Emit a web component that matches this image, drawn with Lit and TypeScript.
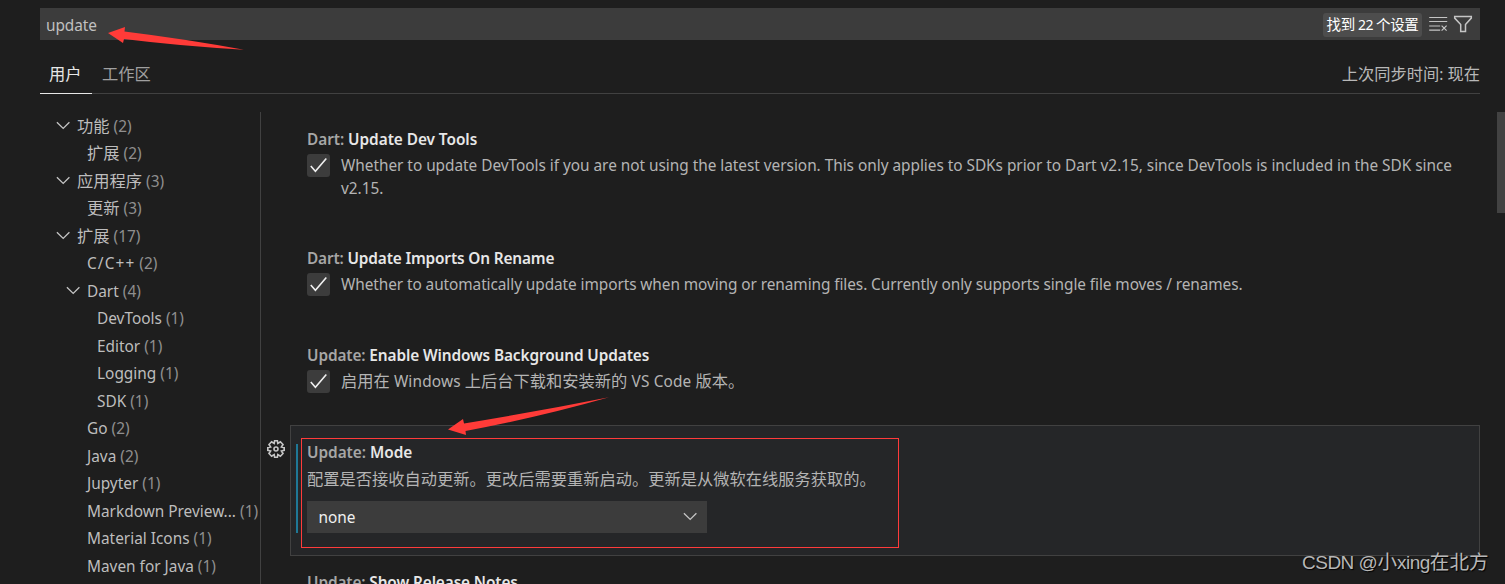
import { LitElement, html, css, svg, nothing, TemplateResult } from "lit";
import { customElement, property } from "lit/decorators.js";
import { classMap } from "lit/directives/class-map.js";

const CJK = /([\u3000-\u303f\u4e00-\u9fff]+)/;

/** Wraps runs of Chinese text so that they get their own size and tracking. */
const mixed = (text: string) =>
  text.split(CJK).map((part, i) => (i % 2 ? html`<span class="han">${part}</span>` : part));

const hanStyle = css`
  .han {
    font-family: "Noto Sans CJK SC", sans-serif;
    font-size: 16.25px;
    letter-spacing: 0;
    line-height: 1;
  }
`;

const chevron = html`<svg width="20" height="20" viewBox="0 0 20 20" fill="none" stroke="currentColor" stroke-width="1.3">${svg`<path d="M3.9 6.3 10.200 12.400l6.200-6.100" />`}</svg>`;

interface TreeRow {
  label: string;
  count: number;
  level: number;
  open?: boolean;
  wide?: boolean;
}

const ROWS: TreeRow[] = [
  { label: "功能", count: 2, level: 0, open: true },
  { label: "扩展", count: 2, level: 1 },
  { label: "应用程序", count: 3, level: 0, open: true },
  { label: "更新", count: 3, level: 1 },
  { label: "扩展", count: 17, level: 0, open: true },
  { label: "C/C++", count: 2, level: 1, wide: true },
  { label: "Dart", count: 4, level: 1, open: true },
  { label: "DevTools", count: 1, level: 2 },
  { label: "Editor", count: 1, level: 2 },
  { label: "Logging", count: 1, level: 2 },
  { label: "SDK", count: 1, level: 2 },
  { label: "Go", count: 2, level: 1 },
  { label: "Java", count: 2, level: 1 },
  { label: "Jupyter", count: 1, level: 1 },
  { label: "Markdown Preview...", count: 1, level: 1 },
  { label: "Material Icons", count: 1, level: 1 },
  { label: "Maven for Java", count: 1, level: 1 },
];

@customElement("settings-toc")
export class SettingsToc extends LitElement {
  static styles = [
    hanStyle,
    css`
      :host { display: block; }
      .row { display: flex; align-items: center; height: 27.5px; line-height: 27.5px; white-space: pre; padding-left: 37px; }
      .level-1 { padding-left: 47px; }
      .level-2 { padding-left: 57px; }
      .open { padding-left: 13px; }
      .open.level-1 { padding-left: 23px; }
      .twist { display: flex; width: 24px; color: #c5c5c5; }
      .label { color: #bdbdbd; }
      .wide { letter-spacing: 1.1px; }
      .count { color: #8f8f8f; margin-left: 4px; }
    `,
  ];

  render() {
    return ROWS.map(
      (r) => html`<div class=${classMap({ row: true, open: !!r.open, [`level-${r.level}`]: true })}>
        ${r.open ? html`<span class="twist">${chevron}</span>` : nothing}<span class=${classMap({ label: true, wide: !!r.wide })}>${mixed(r.label)}</span><span class="count">(${r.count})</span>
      </div>`
    );
  }
}

@customElement("setting-item")
export class SettingItem extends LitElement {
  @property() category = "";
  @property() name = "";
  @property() description = "";
  @property() kind = "check";
  @property() value = "";

  static styles = [
    hanStyle,
    css`
      :host { display: block; box-sizing: border-box; padding: 16px 16px 0 17px; }
      .title { line-height: 23px; font-weight: 600; white-space: pre; letter-spacing: var(--title-track, 0); }
      .category { color: #a6a6a6; }
      .name { color: #e7e7e7; }
      .line { display: flex; margin-top: 3px; }
      .box { display: flex; flex: none; width: 23px; height: 23px; border-radius: 3px; background: #3c3c3c; color: #f0f0f0; margin-right: 11px; }
      .desc { color: #b4b4b4; line-height: 23px; letter-spacing: var(--desc-track, 0); }
      .text { color: #b4b4b4; line-height: 23px; margin-top: 4px; }
      .select { display: flex; align-items: center; justify-content: space-between; box-sizing: border-box; width: 400px; height: 32px; margin-top: 10px; padding: 1px 7px 0 11.5px; background: #3c3c3c; color: #f0f0f0; }
      .select svg { color: #c5c5c5; }
    `,
  ];

  private body(): TemplateResult | typeof nothing {
    if (this.kind === "check") {
      return html`<div class="line">
        <span class="box"><svg width="23" height="23" viewBox="0 0 23 23" fill="none" stroke="currentColor" stroke-width="1.6">${svg`<path d="M3.8 12 8.400 17.200 19.300 4.400" />`}</svg></span>
        <span class="desc">${mixed(this.description)}</span>
      </div>`;
    }
    if (this.kind === "select") {
      return html`<div class="text">${mixed(this.description)}</div>
        <div class="select"><span>${this.value}</span>${chevron}</div>`;
    }
    return nothing;
  }

  render() {
    return html`<div class="title"><span class="category">${this.category}: </span><span class="name">${this.name}</span></div>
      ${this.body()}`;
  }
}

@customElement("app-root")
export class AppRoot extends LitElement {
  static styles = [
    hanStyle,
    css`
      :host {
        display: block;
        position: relative;
        box-sizing: border-box;
        width: 1505px;
        height: 584px;
        padding: 8px 25px 0 40px;
        overflow: hidden;
        background: #1e1e1e;
        color: #b8b8b8;
        font: 15.4px "Noto Sans", "Noto Sans CJK SC", sans-serif;
      }
      .search { display: flex; align-items: center; box-sizing: border-box; height: 32px; padding: 0 7px 0 6px; background: #3c3c3c; }
      .query { flex: 1; line-height: 30px; padding-top: 4px; color: #c0c0c0; letter-spacing: -0.1px; }
      .found { box-sizing: border-box; width: 99px; height: 24px; line-height: 24px; border-radius: 3px; background: #4d4d4d; color: #fff; text-align: center; white-space: nowrap; font-size: 14px; margin: 1px 6px 0 0; letter-spacing: -0.5px; }
      .found .han { font-size: 14.5px; letter-spacing: -0.4px; }
      .icon { display: block; color: #c5c5c5; }
      .icon + .icon { margin-left: 5px; }
      .tabs { display: flex; box-sizing: border-box; height: 54px; border-bottom: 1px solid #414141; line-height: 36px; padding-top: 17px; }
      .tab { box-sizing: border-box; height: 37px; padding: 0 10px 0 9px; width: 52px; color: #a0a0a0; white-space: nowrap; }
      .tab.active { color: #e7e7e7; border-bottom: 1px solid #e7e7e7; }
      .tab + .tab { padding-left: 10px; }
      .sync { margin-left: auto; white-space: pre; }
      .body { display: flex; margin-top: 18px; height: 472px; }
      .toc { box-sizing: border-box; width: 221px; height: 472px; border-right: 1px solid #414141; padding-top: 0.6px; flex: none; }
      .gutter { flex: none; width: 29px; padding: 327px 0 0 5px; box-sizing: border-box; color: #c5c5c5; }
      .list { flex: none; width: 1190px; }
      .one { height: 118.6px; --desc-track: -0.032px; --title-track: -0.06px; }
      .two { height: 97.4px; --desc-track: -0.081px; --title-track: -0.16px; }
      .three { height: 97px; --desc-track: 0.15px; --title-track: -0.12px; }
      .four { height: 131px; border: 1px solid #414141; background: #252628; padding: 15px 16px 0; --title-track: -0.04px; }
      .five { height: 60px; padding-top: 15px; --title-track: -0.12px; }
      .modified { position: absolute; left: 296px; top: 444px; width: 2px; height: 89px; background: #1f7896; }
      .scroll { position: absolute; left: 1497px; top: 112px; width: 8px; height: 101px; background: #424242; }
      .marks { position: absolute; inset: 0; }
      .watermark { position: absolute; left: 1302px; top: 548px; line-height: 29px; white-space: pre; color: #b7b7b7; font-family: "Liberation Sans", sans-serif; font-size: 19px; text-shadow: 1px 1px 1px #000; letter-spacing: -0.5px; }
      .watermark .han { font-size: 19.6px; }
    `,
  ];

  render() {
    return html`
      <div class="search">
        <span class="query">update</span>
        <span class="found">${mixed("找到 22 个设置")}</span>
        <svg class="icon" width="20" height="20" viewBox="0 0 20 20" fill="none" stroke="currentColor" stroke-width="1.2">
          <path d="M1.200 3.500h18M1.200 7.500h18M1.200 12h11M1.200 16.200h11M13.600 11.600l5 5M18.600 11.600l-5 5" />
        </svg>
        <svg class="icon" width="20" height="20" viewBox="0 0 20 20" fill="none" stroke="currentColor" stroke-width="1.5">
          <path d="M1.700 2.500h16.600v1.600l-5.800 6.500v7H7.700v-7L1.700 4.100z" />
        </svg>
      </div>
      <div class="tabs">
        <span class="tab active">${mixed("用户")}</span>
        <span class="tab">${mixed("工作区")}</span>
        <span class="sync">${mixed("上次同步时间: 现在")}</span>
      </div>
      <div class="body">
        <settings-toc class="toc"></settings-toc>
        <div class="gutter">
          <svg class="icon" width="20" height="20" viewBox="-10 -10 20 20" fill="none" stroke="currentColor" stroke-width="1.6">
            <path d="M-1.400-8.200H1.400L1.800-5.500 4.400-7.200 7-4.500 5.400-2 8.200-1.400V1.400L5.400 2 7 4.500 4.400 7.200 1.800 5.500 1.400 8.200H-1.400L-1.800 5.500-4.400 7.200-7 4.500-5.400 2-8.200 1.400V-1.400L-5.400-2-7-4.500-4.400-7.200-1.800-5.500Z" />
            <circle r="2" />
          </svg>
        </div>
        <div class="list">
          <setting-item class="one" category="Dart" name="Update Dev Tools" description="Whether to update DevTools if you are not using the latest version. This only applies to SDKs prior to Dart v2.15, since DevTools is included in the SDK since v2.15."></setting-item>
          <setting-item class="two" category="Dart" name="Update Imports On Rename" description="Whether to automatically update imports when moving or renaming files. Currently only supports single file moves / renames."></setting-item>
          <setting-item class="three" category="Update" name="Enable Windows Background Updates" description="启用在 Windows 上后台下载和安装新的 VS Code 版本。"></setting-item>
          <setting-item class="four" kind="select" category="Update" name="Mode" value="none" description="配置是否接收自动更新。更改后需要重新启动。更新是从微软在线服务获取的。"></setting-item>
          <setting-item class="five" kind="title" category="Update" name="Show Release Notes"></setting-item>
        </div>
      </div>
      <div class="modified"></div>
      <div class="scroll"></div>
      <svg class="marks" width="1505" height="584" viewBox="0 0 1505 584">
        <rect x="301.5" y="438.5" width="597" height="109" fill="none" stroke="#ff3b3b" />
        <path fill="#ff3b38" d="M108 33 125 27 124.500 31.500Q185 39 244 49.700 180 46 124 39L123 43Z" />
        <path fill="#ff3b38" d="M448 429.500 463 419 464 423.500Q535 412 609 397.300 540 417 465.500 431L466 435Z" />
      </svg>
      <div class="watermark">CSDN @${mixed("小xing在北方")}</div>
    `;
  }
}
